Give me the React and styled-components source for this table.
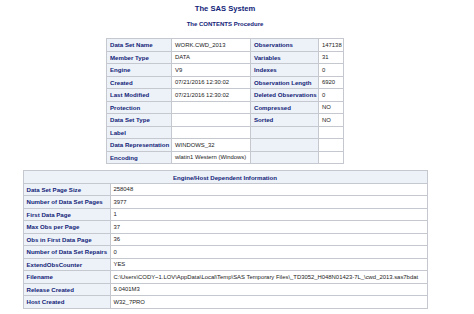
import React from "react";
import styled, { createGlobalStyle } from "styled-components";

const Global = createGlobalStyle`
  html, body { margin: 0; padding: 0; background: #ffffff; }
  body { font-family: "Liberation Sans", Arial, sans-serif; }
`;

const Page = styled.div`
  width: 450px;
  display: flex;
  flex-direction: column;
  align-items: center;
`;

const Title = styled.div`
  height: 18px;
  line-height: 18px;
  font-size: 7.6px;
  font-weight: bold;
  color: #112277;
`;

const Subtitle = styled.div`
  height: 12px;
  line-height: 12px;
  font-size: 6px;
  font-weight: bold;
  color: #112277;
  margin-bottom: 8px;
`;

const Grid = styled.div`
  display: grid;
  grid-template-columns: ${(p) => p.$cols};
  grid-auto-rows: 12.5px;
  border-top: 1px solid #c5c8ce;
  border-left: 1px solid #c5c8ce;
  margin-bottom: ${(p) => p.$mb || 0}px;
`;

const Cell = styled.div`
  box-sizing: border-box;
  border-right: 1px solid #c5c8ce;
  border-bottom: 1px solid #c5c8ce;
  background: ${(p) => (p.$head ? "#edf2f9" : "#ffffff")};
  color: ${(p) => (p.$head ? "#112277" : "#222222")};
  font-weight: ${(p) => (p.$head ? "bold" : "normal")};
  font-size: ${(p) => (p.$head ? "6.1px" : "5.9px")};
  display: flex;
  align-items: center;
  padding-left: 3px;
  white-space: nowrap;
  overflow: hidden;
`;

const HeaderCell = styled.div`
  grid-column: 1 / -1;
  height: 13px;
  box-sizing: border-box;
  border-right: 1px solid #c5c8ce;
  border-bottom: 1px solid #c5c8ce;
  background: #edf2f9;
  color: #112277;
  font-size: 6.1px;
  font-weight: bold;
  display: flex;
  align-items: center;
  justify-content: center;
`;

const attrs = [
  ["Data Set Name", "WORK.CWD_2013", "Observations", "147138"],
  ["Member Type", "DATA", "Variables", "31"],
  ["Engine", "V9", "Indexes", "0"],
  ["Created", "07/21/2016 12:30:02", "Observation Length", "6920"],
  ["Last Modified", "07/21/2016 12:30:02", "Deleted Observations", "0"],
  ["Protection", "", "Compressed", "NO"],
  ["Data Set Type", "", "Sorted", "NO"],
  ["Label", "", "", ""],
  ["Data Representation", "WINDOWS_32", "", ""],
  ["Encoding", "wlatin1 Western (Windows)", "", ""],
];

const engine = [
  ["Data Set Page Size", "258048"],
  ["Number of Data Set Pages", "3977"],
  ["First Data Page", "1"],
  ["Max Obs per Page", "37"],
  ["Obs in First Data Page", "36"],
  ["Number of Data Set Repairs", "0"],
  ["ExtendObsCounter", "YES"],
  [
    "Filename",
    "C:\\Users\\CODY~1.LOV\\AppData\\Local\\Temp\\SAS Temporary Files\\_TD3052_H048N01423-7L_\\cwd_2013.sas7bdat",
  ],
  ["Release Created", "9.0401M3"],
  ["Host Created", "W32_7PRO"],
];

export default function App() {
  return (
    <>
      <Global />
      <Page>
        <Title>The SAS System</Title>
        <Subtitle>The CONTENTS Procedure</Subtitle>
        <Grid $cols="65px 79px 68px 25px" $mb={6}>
          {attrs.map((r, i) => (
            <React.Fragment key={i}>
              <Cell $head>{r[0]}</Cell>
              <Cell>{r[1]}</Cell>
              <Cell $head>{r[2]}</Cell>
              <Cell>{r[3]}</Cell>
            </React.Fragment>
          ))}
        </Grid>
        <Grid $cols="87px 317px">
          <HeaderCell>Engine/Host Dependent Information</HeaderCell>
          {engine.map((r, i) => (
            <React.Fragment key={i}>
              <Cell $head>{r[0]}</Cell>
              <Cell>{r[1]}</Cell>
            </React.Fragment>
          ))}
        </Grid>
      </Page>
    </>
  );
}
